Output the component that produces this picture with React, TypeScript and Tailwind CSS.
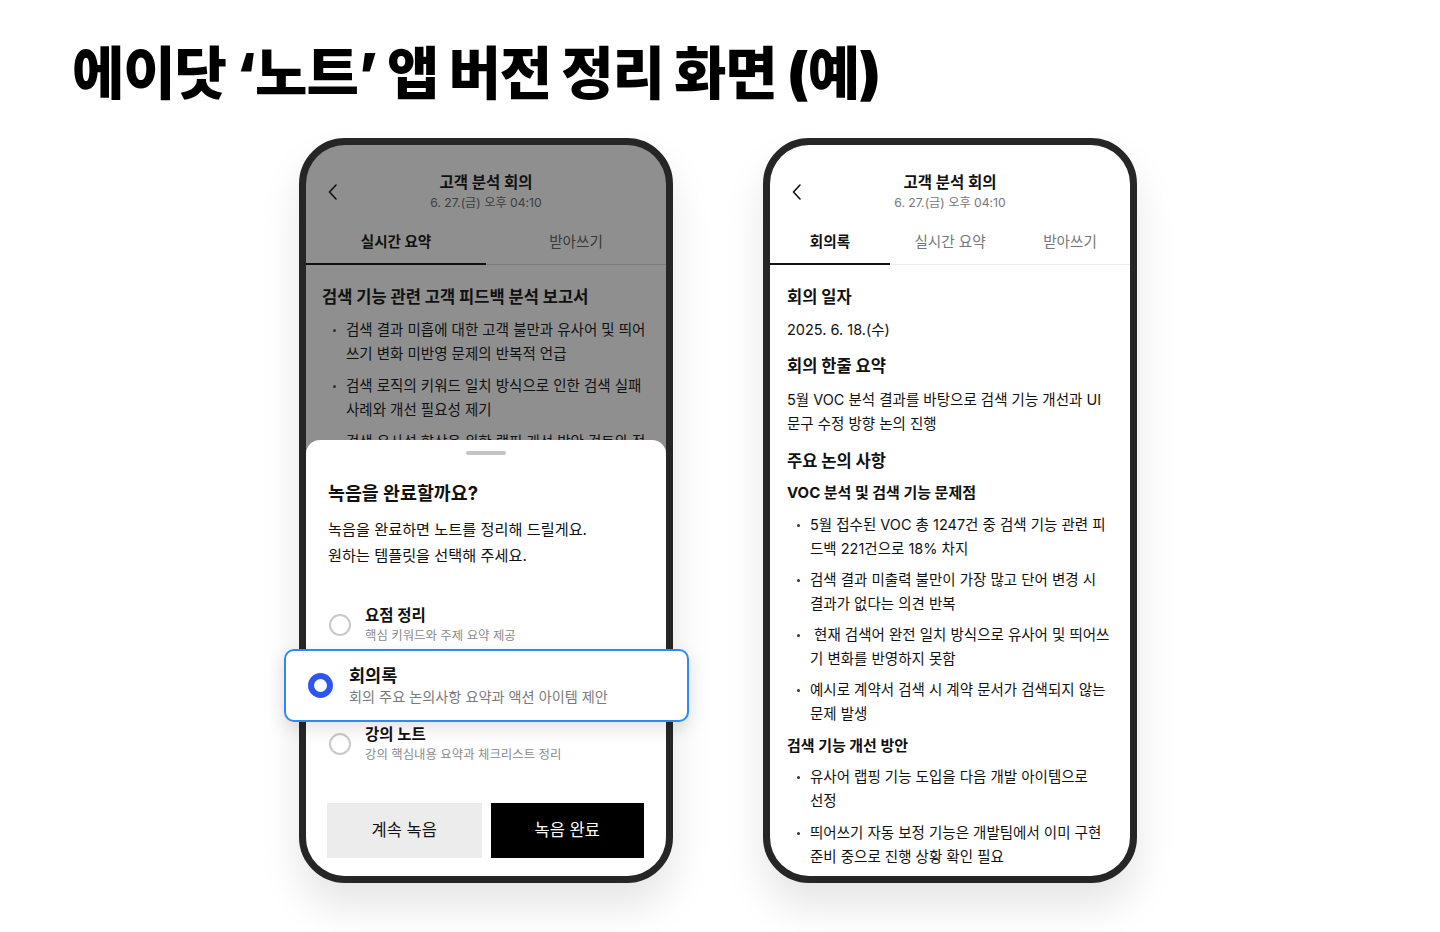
import React from "react";

const FONT = { fontFamily: 'Inter, "Noto Sans CJK KR", "Noto Sans", sans-serif' };

function Chevron({ color = "#111" }: { color?: string }) {
  return (
    <svg width="12" height="18" viewBox="0 0 12 18" fill="none">
      <path d="M9 2L2.5 9L9 16" stroke={color} strokeWidth="1.6" strokeLinecap="round" strokeLinejoin="round" />
    </svg>
  );
}

function Header({ sub }: { sub: string }) {
  return (
    <div className="relative pt-[28px] flex flex-col items-center">
      <div className="absolute left-[21px] top-[38px]">
        <Chevron />
      </div>
      <div className="text-[15.5px] leading-[20px] font-bold text-[#111]">고객 분석 회의</div>
      <div className={`text-[12.2px] leading-[16px] mt-[2px] ${sub}`}>6. 27.(금) 오후 04:10</div>
    </div>
  );
}

function Bullet({ lines, dotLeft }: { lines: string[]; dotLeft: string }) {
  return (
    <div className="flex text-[14.5px] leading-[24px] text-[#111]">
      <div className={`${dotLeft} shrink-0 relative`}>
        <span className="absolute right-[10px] top-[11px] w-[3px] h-[3px] rounded-full bg-[#333]" />
      </div>
      <div>
        {lines.map((l, i) => (
          <div key={i} className="whitespace-pre">
            {l}
          </div>
        ))}
      </div>
    </div>
  );
}

function Radio({ title, sub }: { title: string; sub: string }) {
  return (
    <div className="flex items-center pl-[1px]">
      <div className="w-[22px] h-[22px] rounded-full border-2 border-[#c9c9c9] shrink-0" />
      <div className="ml-[14px]">
        <div className="text-[15.5px] leading-[20px] font-bold text-[#111]">{title}</div>
        <div className="text-[12.4px] leading-[16px] mt-[2px] text-[#8a8a8a]">{sub}</div>
      </div>
    </div>
  );
}

function LeftPhone() {
  return (
    <div className="relative w-[374px] h-[745px] rounded-[46px] border-[7px] border-[#262626] bg-[#262626] shadow-[0_24px_40px_rgba(0,0,0,0.10)]">
      <div className="h-full rounded-[39px] overflow-hidden bg-[#8f8f8f]">
        <Header sub="text-[#3e3e3e]" />
        <div className="mt-[21px] flex border-b border-[#7c7c7c]">
          <div className="w-1/2 text-center text-[14.6px] leading-[20px] pb-[11px] font-bold text-[#111] border-b-2 border-[#111] -mb-px">
            실시간 요약
          </div>
          <div className="w-1/2 text-center text-[14.6px] leading-[20px] pb-[11px] text-[#3a3a3a]">받아쓰기</div>
        </div>
        <div className="px-[16px] pt-[20px]">
          <div className="text-[16.5px] leading-[24px] font-bold text-[#111]">검색 기능 관련 고객 피드백 분석 보고서</div>
          <div className="mt-[9px] flex flex-col gap-[8px]">
            <Bullet dotLeft="w-[24px]" lines={["검색 결과 미흡에 대한 고객 불만과 유사어 및 띄어", "쓰기 변화 미반영 문제의 반복적 언급"]} />
            <Bullet dotLeft="w-[24px]" lines={["검색 로직의 키워드 일치 방식으로 인한 검색 실패", "사례와 개선 필요성 제기"]} />
            <Bullet dotLeft="w-[24px]" lines={["검색 유사성 향상을 위한 랩핑 개선 방안 검토와 적", "용 필요"]} />
          </div>
        </div>
      </div>
      {/* bottom sheet */}
      <div className="absolute left-0 right-0 bottom-0 top-[295px] bg-white rounded-t-[14px] rounded-b-[39px] flex flex-col px-[22px]">
        <div className="mt-[11px] mx-auto w-[40px] h-[4px] rounded-full bg-[#c4c4c4]" />
        <div className="mt-[25px] text-[18.4px] leading-[26px] font-bold text-[#111]">녹음을 완료할까요?</div>
        <div className="mt-[11px] text-[15.2px] leading-[26px] text-[#111]">
          <div>녹음을 완료하면 노트를 정리해 드릴게요.</div>
          <div>원하는 템플릿을 선택해 주세요.</div>
        </div>
        <div className="mt-[37px]">
          <Radio title="요점 정리" sub="핵심 키워드와 주제 요약 제공" />
        </div>
        <div className="mt-[5px] -ml-[44px] -mr-[45px] relative z-10 bg-white border-2 border-[#2b8af5] rounded-[10px] shadow-[0_6px_18px_rgba(0,0,0,0.12)] flex items-center pl-[22px] py-[14px]">
          <div className="w-[25px] h-[25px] rounded-full border-[6px] border-[#2f55f0] bg-white shrink-0" />
          <div className="ml-[16px]">
            <div className="text-[17.5px] leading-[22px] font-bold text-[#111]">회의록</div>
            <div className="text-[14.2px] leading-[18px] mt-[1px] text-[#7a7a7a]">회의 주요 논의사항 요약과 액션 아이템 제안</div>
          </div>
        </div>
        <div className="mt-[3px]">
          <Radio title="강의 노트" sub="강의 핵심내용 요약과 체크리스트 정리" />
        </div>
        <div className="mt-[40px] flex gap-[9px] -ml-[1px]">
          <div className="w-[155px] h-[55px] bg-[#ececec] flex items-center justify-center text-[16.5px] text-[#111]">
            계속 녹음
          </div>
          <div className="w-[154px] h-[55px] bg-black flex items-center justify-center text-[16.5px] text-white">
            녹음 완료
          </div>
        </div>
      </div>
    </div>
  );
}

function H({ children, cls = "" }: { children: React.ReactNode; cls?: string }) {
  return <div className={`text-[16.5px] leading-[24px] font-bold text-[#111] ${cls}`}>{children}</div>;
}
function H2({ children, cls = "" }: { children: React.ReactNode; cls?: string }) {
  return <div className={`text-[15px] leading-[22px] font-bold text-[#111] ${cls}`}>{children}</div>;
}
function P({ children, cls = "" }: { children: React.ReactNode; cls?: string }) {
  return <div className={`text-[14.5px] leading-[24px] text-[#111] ${cls}`}>{children}</div>;
}

function RightPhone() {
  const d = "w-[23px]";
  return (
    <div className="relative w-[374px] h-[745px] rounded-[46px] border-[7px] border-[#262626] bg-[#262626] shadow-[0_24px_40px_rgba(0,0,0,0.10)]">
      <div className="h-full rounded-[39px] overflow-hidden bg-white">
        <Header sub="text-[#777]" />
        <div className="mt-[21px] flex border-b border-[#ececec]">
          <div className="w-1/3 text-center text-[14.6px] leading-[20px] pb-[11px] font-bold text-[#111] border-b-2 border-[#111] -mb-px">
            회의록
          </div>
          <div className="w-1/3 text-center text-[14.6px] leading-[20px] pb-[11px] text-[#777]">실시간 요약</div>
          <div className="w-1/3 text-center text-[14.6px] leading-[20px] pb-[11px] text-[#777]">받아쓰기</div>
        </div>
        <div className="pl-[17px] pr-[8px] pt-[20px]">
          <H>회의 일자</H>
          <P cls="mt-[9px]">2025. 6. 18.(수)</P>
          <H cls="mt-[12px]">회의 한줄 요약</H>
          <P cls="mt-[10px]">
            <div className="whitespace-pre">5월 VOC 분석 결과를 바탕으로 검색 기능 개선과 UI</div>
            <div className="whitespace-pre">문구 수정 방향 논의 진행</div>
          </P>
          <H cls="mt-[13px]">주요 논의 사항</H>
          <H2 cls="mt-[9px]">VOC 분석 및 검색 기능 문제점</H2>
          <div className="mt-[9px] flex flex-col gap-[7px]">
            <Bullet dotLeft={d} lines={["5월 접수된 VOC 총 1247건 중 검색 기능 관련 피", "드백 221건으로 18% 차지"]} />
            <Bullet dotLeft={d} lines={["검색 결과 미출력 불만이 가장 많고 단어 변경 시", "결과가 없다는 의견 반복"]} />
            <Bullet dotLeft={d} lines={[" 현재 검색어 완전 일치 방식으로 유사어 및 띄어쓰", "기 변화를 반영하지 못함"]} />
            <Bullet dotLeft={d} lines={["예시로 계약서 검색 시 계약 문서가 검색되지 않는", "문제 발생"]} />
          </div>
          <H2 cls="mt-[9px]">검색 기능 개선 방안</H2>
          <div className="mt-[8px] flex flex-col gap-[8px]">
            <Bullet dotLeft={d} lines={["유사어 랩핑 기능 도입을 다음 개발 아이템으로", "선정"]} />
            <Bullet dotLeft={d} lines={["띄어쓰기 자동 보정 기능은 개발팀에서 이미 구현", "준비 중으로 진행 상황 확인 필요"]} />
          </div>
        </div>
      </div>
    </div>
  );
}

export default function App() {
  return (
    <div className="w-[1440px] h-[932px] bg-white overflow-hidden" style={FONT}>
      <div className="pl-[72px] pt-[40px] text-[57px] leading-[68px] font-black text-black tracking-[-0.02em] whitespace-nowrap">
        에이닷 ‘노트’ 앱 버전 정리 화면 (예)
      </div>
      <div className="mt-[30px] pl-[299px] flex gap-[90px]">
        <LeftPhone />
        <RightPhone />
      </div>
    </div>
  );
}
